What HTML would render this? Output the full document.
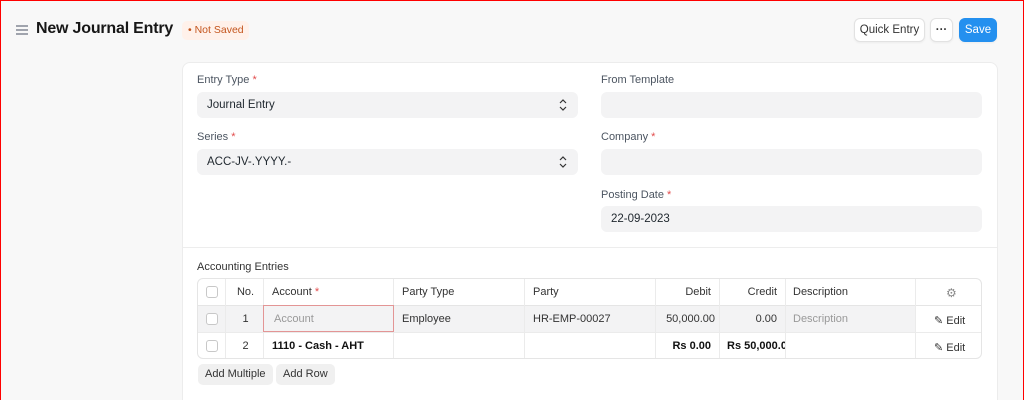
<!DOCTYPE html>
<html><head><style>
*{box-sizing:border-box;margin:0;padding:0}
html{width:1024px;height:400px;overflow:hidden}
body{width:1024px;height:400px;overflow:hidden;background:#f8f8f8;font-family:"Liberation Sans",sans-serif;color:#1f272e;position:relative}
.w{position:absolute;left:0;top:1px;width:1024px;height:399px;overflow:hidden}
.abs{position:absolute}
.title{left:36px;top:19px;font-size:16px;font-weight:bold;color:#171717;letter-spacing:-0.2px}
.badge{left:182px;top:20px;height:19px;width:67px;background:#fff1ea;border-radius:5px;color:#c4551d;font-size:10.5px;line-height:19px;padding-left:6px}
.btn{top:17px;height:24px;background:#fff;border:1px solid #e2e2e2;border-radius:6px;font-size:11.5px;line-height:22px;text-align:center;color:#333;box-shadow:0 1px 2px rgba(0,0,0,.05)}
.card{left:182px;top:61px;width:816px;height:350px;background:#fff;border:1px solid #ececec;border-radius:8px}
.lbl{font-size:11px;color:#4c5561}
.lbl b{color:#e24c4c;font-weight:normal}
.inp{height:26px;background:#f3f3f4;border-radius:6px;font-size:11.5px;line-height:26px;padding-left:10px;color:#1f272e}
.tbl{left:197px;top:277px;width:785px;height:81px;border:1px solid #e5e5e5;border-radius:6px;overflow:hidden}
.c{position:absolute;font-size:11px;line-height:26px;color:#333;padding:0 8px}
.vl{position:absolute;top:0;width:1px;height:81px;background:#ebebeb}
.cb{position:absolute;left:8px;width:12px;height:12px;border:1px solid #c8c8c8;border-radius:3px;background:#fff}
.sbtn{top:363px;height:21px;background:#f0f0f0;border-radius:5px;font-size:11px;line-height:21px;padding:0 7px;color:#333}
</style></head><body><div class="w">
<svg class="abs" style="left:15px;top:23px" width="14" height="12"><path d="M1 2h12M1 6h12M1 10h12" stroke="#6b7280" stroke-width="1.3"/></svg>
<div class="abs title">New Journal Entry</div>
<div class="abs badge">• Not Saved</div>
<div class="abs btn" style="left:854px;width:71px">Quick Entry</div>
<div class="abs btn" style="left:930px;width:23px;font-weight:bold">···</div>
<div class="abs btn" style="left:959px;width:38px;background:#2490ef;border-color:#2490ef;color:#fff">Save</div>
<div class="abs card"></div>
<div class="abs lbl" style="left:197px;top:73px">Entry Type <b>*</b></div>
<div class="abs inp" style="left:197px;top:91px;width:381px">Journal Entry</div>
<svg class="abs" style="left:559px;top:98px" width="8" height="12"><path d="M1 4l3-3 3 3M1 8l3 3 3-3" stroke="#333" fill="none" stroke-width="1.2"/></svg>
<div class="abs lbl" style="left:197px;top:130px">Series <b>*</b></div>
<div class="abs inp" style="left:197px;top:148px;width:381px">ACC-JV-.YYYY.-</div>
<svg class="abs" style="left:559px;top:155px" width="8" height="12"><path d="M1 4l3-3 3 3M1 8l3 3 3-3" stroke="#333" fill="none" stroke-width="1.2"/></svg>
<div class="abs lbl" style="left:601px;top:73px">From Template</div>
<div class="abs inp" style="left:601px;top:91px;width:381px"></div>
<div class="abs lbl" style="left:601px;top:130px">Company <b>*</b></div>
<div class="abs inp" style="left:601px;top:148px;width:381px"></div>
<div class="abs lbl" style="left:601px;top:188px">Posting Date <b>*</b></div>
<div class="abs inp" style="left:601px;top:205px;width:381px">22-09-2023</div>
<div class="abs" style="left:183px;top:246px;width:814px;height:1px;background:#ededed"></div>
<div class="abs lbl" style="left:197px;top:260px;color:#333">Accounting Entries</div>
<div class="abs tbl">
 <div style="position:absolute;left:0;top:26px;width:785px;height:27px;background:#f3f3f4"></div>
 <div style="position:absolute;left:0;top:26px;width:785px;height:1px;background:#e5e5e5"></div>
 <div style="position:absolute;left:0;top:53px;width:785px;height:1px;background:#ebebeb"></div>
 <div style="position:absolute;left:718px;top:27px;width:67px;height:26px;background:#fff"></div>
 <div class="vl" style="left:27px"></div><div class="vl" style="left:65px"></div><div class="vl" style="left:195px"></div><div class="vl" style="left:326px"></div><div class="vl" style="left:457px"></div><div class="vl" style="left:521px"></div><div class="vl" style="left:587px"></div><div class="vl" style="left:717px"></div>
 <div class="cb" style="top:7px"></div><div class="cb" style="top:34px"></div><div class="cb" style="top:61px"></div>
 <div class="c" style="left:30px;top:0;width:35px;text-align:center">No.</div>
 <div class="c" style="left:66px;top:0">Account <span style="color:#e24c4c">*</span></div>
 <div class="c" style="left:196px;top:0">Party Type</div>
 <div class="c" style="left:327px;top:0">Party</div>
 <div class="c" style="left:457px;top:0;width:64px;text-align:right">Debit</div>
 <div class="c" style="left:521px;top:0;width:66px;text-align:right">Credit</div>
 <div class="c" style="left:587px;top:0">Description</div>
 <div class="c" style="left:740px;top:1px;font-size:12px;color:#888">⚙</div>
 <div class="c" style="left:30px;top:27px;width:35px;text-align:center">1</div>
 <div style="position:absolute;left:65px;top:26px;width:131px;height:27px;border:1px solid #e39595;background:#f3f3f4"></div>
 <div class="c" style="left:68px;top:27px;color:#999">Account</div>
 <div class="c" style="left:196px;top:27px">Employee</div>
 <div class="c" style="left:327px;top:27px">HR-EMP-00027</div>
 <div class="c" style="left:457px;top:27px;width:64px;text-align:right;overflow:hidden;white-space:nowrap;padding-right:4px">50,000.00</div>
 <div class="c" style="left:521px;top:27px;width:66px;text-align:right">0.00</div>
 <div class="c" style="left:587px;top:27px;color:#999">Description</div>
 <div class="c" style="left:728px;top:29px">✎ Edit</div>
 <div class="c" style="left:30px;top:54px;width:35px;text-align:center">2</div>
 <div class="c" style="left:66px;top:54px;font-weight:bold;color:#111">1110 - Cash - AHT</div>
 <div class="c" style="left:457px;top:54px;width:64px;text-align:right;font-weight:bold;color:#111">Rs 0.00</div>
 <div class="c" style="left:521px;top:54px;width:66px;white-space:nowrap;overflow:hidden;font-weight:bold;color:#111;padding-left:8px">Rs 50,000.00</div>
 <div class="c" style="left:728px;top:56px">✎ Edit</div>
</div>
<div class="abs sbtn" style="left:198px">Add Multiple</div>
<div class="abs sbtn" style="left:276px">Add Row</div>
</div>
<div class="abs" style="left:0;top:0;width:1024px;height:400px;border:1px solid #f00;border-bottom:none;pointer-events:none"></div>
</body></html>
